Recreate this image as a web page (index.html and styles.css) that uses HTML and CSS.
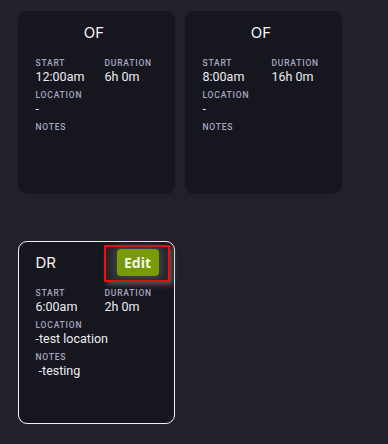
FILE: index.html
```html
<!DOCTYPE html>
<html>
<head>
<meta charset="utf-8">
<link rel="stylesheet" href="styles.css">
</head>
<body>
<div class="board">
  <div class="card">
    <div class="head head-center"><span class="title">OF</span></div>
    <div class="fields">
      <div class="field"><div class="label">Start</div><div class="value">12:00am</div></div>
      <div class="field"><div class="label">Duration</div><div class="value">6h 0m</div></div>
      <div class="field wide"><div class="label">Location</div><div class="value">-</div></div>
      <div class="field wide"><div class="label">Notes</div><div class="value"></div></div>
    </div>
  </div>
  <div class="card">
    <div class="head head-center"><span class="title">OF</span></div>
    <div class="fields">
      <div class="field"><div class="label">Start</div><div class="value">8:00am</div></div>
      <div class="field"><div class="label">Duration</div><div class="value">16h 0m</div></div>
      <div class="field wide"><div class="label">Location</div><div class="value">-</div></div>
      <div class="field wide"><div class="label">Notes</div><div class="value"></div></div>
    </div>
  </div>
  <div class="card selected">
    <div class="head head-split">
      <span class="title">DR</span>
      <div class="highlight"><button class="edit">Edit</button></div>
    </div>
    <div class="fields">
      <div class="field"><div class="label">Start</div><div class="value">6:00am</div></div>
      <div class="field"><div class="label">Duration</div><div class="value">2h 0m</div></div>
      <div class="field wide"><div class="label">Location</div><div class="value">-test location</div></div>
      <div class="field wide"><div class="label">Notes</div><div class="value">&nbsp;-testing</div></div>
    </div>
  </div>
</div>
</body>
</html>
```
FILE: styles.css
```css
html, body {
  margin: 0;
  padding: 0;
  background: #20212a;
  font-family: Roboto, "Noto Sans", sans-serif;
  color: #ececf2;
}
.board {
  display: grid;
  grid-template-columns: 157px 157px;
  column-gap: 10px;
  row-gap: 47px;
  padding: 11px 0 0 18px;
}
.card {
  box-sizing: border-box;
  height: 183px;
  background: #16161e;
  border: 1.5px solid transparent;
  border-radius: 9px;
  padding: 2.5px 16.5px 0 16.5px;
}
.card.selected {
  border-color: #f2f2f5;
}
.head {
  height: 37px;
  display: flex;
  align-items: center;
}
.head-center {
  justify-content: center;
  padding-right: 5px;
}
.head-split {
  justify-content: space-between;
  margin-right: -12px;
}
.title {
  font-family: Inter, Roboto, sans-serif;
  font-size: 15px;
  line-height: 18px;
  color: #f4f4f7;
}
.highlight {
  box-sizing: border-box;
  width: 66px;
  height: 37px;
  border: 2px solid #f00d0d;
  display: flex;
  align-items: flex-start;
  padding: 2px 0 0 11px;
  background: rgba(255,255,255,0.07);
  box-shadow: 3px 3px 5px rgba(120,120,130,0.6);
}
.edit {
  width: 42px;
  height: 27px;
  border: none;
  border-radius: 4px;
  background: #789a07;
  color: #f4f6ee;
  font-family: "Open Sans", Inter, sans-serif;
  font-weight: 700;
  font-size: 14px;
  padding: 0;
  box-shadow: 0 0 6px 3px rgba(75,75,85,0.75);
}
.fields {
  margin-top: 6px;
  display: grid;
  grid-template-columns: 69px auto;
  row-gap: 5px;
}
.field.wide {
  grid-column: 1 / span 2;
}
.label {
  font-size: 8.5px;
  line-height: 11px;
  letter-spacing: 0.8px;
  text-transform: uppercase;
  font-weight: 500;
  color: #a7a7c4;
}
.value {
  font-size: 12.5px;
  line-height: 16px;
  min-height: 16px;
  color: #ececf2;
}
```
